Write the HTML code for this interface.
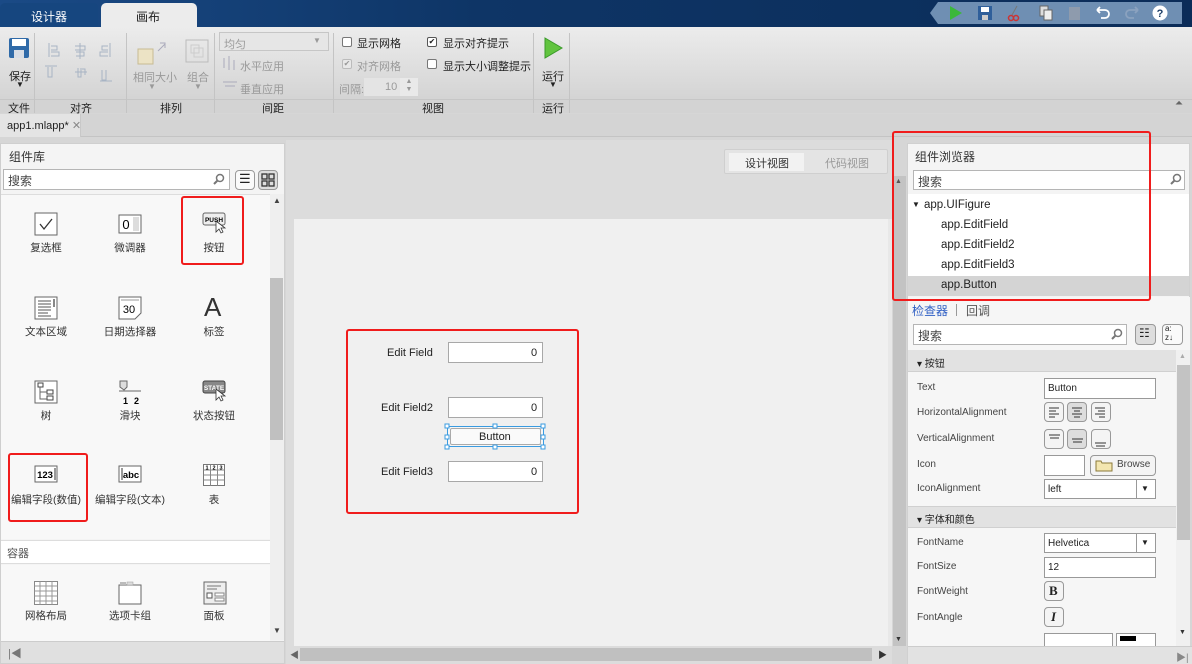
<!DOCTYPE html>
<html><head><meta charset="utf-8"><style>
*{box-sizing:border-box;margin:0;padding:0}
body{width:1192px;height:664px;overflow:hidden;position:relative;background:#d6d6d6;font-family:"Liberation Sans","Noto Sans CJK SC",sans-serif;font-size:11px;color:#222}
.a{position:absolute}
.t{position:absolute;white-space:nowrap}
.red{position:absolute;border:2.5px solid #f01c1c;border-radius:3px}
.ic{position:absolute;text-align:center;width:80px;font-size:10.5px;color:#333}
.box{position:absolute;background:#fff;border:1px solid #aaa}
.lbl{position:absolute;font-size:10px;color:#444;white-space:nowrap}
.g{color:#999}
.btn{position:absolute;width:18px;height:18px;border:1px solid #999;border-radius:4px;background:#f4f4f4}
</style></head><body>
<!-- top bar -->
<div class="a" style="left:0;top:0;width:1192px;height:27px;background:linear-gradient(90deg,#1a4a86,#0e3566 40%,#0b2c58)"></div>
<div class="a" style="left:0;top:3px;width:98px;height:24px;background:#16467f;border-radius:5px 5px 0 0"></div>
<div class="t" style="left:31px;top:8px;color:#fff;font-size:12px">设计器</div>
<div class="a" style="left:101px;top:3px;width:96px;height:24px;background:#ececec;border-radius:5px 5px 0 0"></div>
<div class="t" style="left:136px;top:8px;color:#222;font-size:12px">画布</div>
<div class="a" style="left:930px;top:2px;width:252px;height:22px;background:#6f8fb3;clip-path:polygon(8px 0,100% 0,100% 100%,8px 100%,0 50%)"></div>
<svg class="a" style="left:945px;top:4px" width="235" height="18">
<polygon points="5,2 17,9 5,16" fill="#3bb83b"/>
<rect x="33" y="2" width="14" height="14" fill="#2f5f9a"/><rect x="36" y="3" width="8" height="5" fill="#fff"/><rect x="37" y="11" width="6" height="5" fill="#ccc"/>
<circle cx="66" cy="14" r="2.5" fill="none" stroke="#c33" stroke-width="1.5"/><circle cx="71" cy="14" r="2.5" fill="none" stroke="#c33" stroke-width="1.5"/><line x1="67" y1="11" x2="72" y2="2" stroke="#777"/>
<rect x="95" y="2" width="8" height="10" fill="#ddd" stroke="#666"/><rect x="99" y="6" width="8" height="10" fill="#eee" stroke="#666"/>
<rect x="124" y="3" width="11" height="13" fill="#8e9bad"/>
<path d="M152 6 h8 a4 4 0 0 1 0 8 h-4 M152 6 l3 -3 M152 6 l3 3" fill="none" stroke="#fff" stroke-width="1.8"/>
<path d="M193 6 h-8 a4 4 0 0 0 0 8 h4 M193 6 l-3 -3 M193 6 l-3 3" fill="none" stroke="#8ba2bf" stroke-width="1.8"/>
<circle cx="215" cy="9" r="7.5" fill="#fff"/><text x="215" y="13" font-size="11" font-weight="bold" text-anchor="middle" fill="#1c3d66" font-family="Liberation Sans">?</text>
</svg>
<!-- ribbon -->
<div class="a" style="left:0;top:27px;width:1192px;height:86px;background:linear-gradient(#ececec,#cfcfcf)"></div>
<div class="a" style="left:0;top:99px;width:1192px;height:14px;background:#d3d3d3;border-top:1px solid #c6c6c6"></div>
<div class="a" style="left:34px;top:33px;width:1px;height:80px;background:#c4c4c4"></div>
<div class="a" style="left:126px;top:33px;width:1px;height:80px;background:#c4c4c4"></div>
<div class="a" style="left:214px;top:33px;width:1px;height:80px;background:#c4c4c4"></div>
<div class="a" style="left:333px;top:33px;width:1px;height:80px;background:#c4c4c4"></div>
<div class="a" style="left:533px;top:33px;width:1px;height:80px;background:#c4c4c4"></div>
<div class="a" style="left:569px;top:33px;width:1px;height:80px;background:#c4c4c4"></div>
<div class="t" style="left:8px;top:100px">文件</div><div class="t" style="left:70px;top:100px">对齐</div><div class="t" style="left:160px;top:100px">排列</div><div class="t" style="left:262px;top:100px">间距</div><div class="t" style="left:422px;top:100px">视图</div><div class="t" style="left:542px;top:100px">运行</div>
<svg class="a" style="left:8px;top:37px" width="22" height="22"><rect x="1" y="1" width="20" height="20" rx="2" fill="#2f6aa8"/><rect x="4" y="2" width="14" height="7" fill="#fff"/><rect x="6" y="13" width="10" height="8" fill="#d8dde5"/></svg>
<div class="t" style="left:9px;top:68px;font-size:11px">保存</div><div class="t" style="left:16px;top:80px;font-size:8px">▼</div>
<svg class="a" style="left:42px;top:40px" width="80" height="45" fill="none" stroke="#a8b4c4"><path d="M7 3v14M9 6h6v4H9M9 12h8v4H9"/><path d="M38 3v16M33 6h10v4H33M34 12h8v4h-8"/><path d="M68 3v14M66 6h-6v4h6M66 12h-8v4h8"/><path d="M3 26h12M6 27v10h4V27"/><path d="M33 32h12M36 28v9h3v-9M40 29h3v6"/><path d="M58 41h12M60 30v10h4V30"/></svg>
<svg class="a" style="left:136px;top:37px" width="75" height="30"><rect x="2" y="12" width="15" height="15" fill="#ece3c5" stroke="#c7bb93"/><path d="M22 14l7-7M24 6h5v5" stroke="#aab" fill="none"/><rect x="50" y="3" width="22" height="22" fill="none" stroke="#bbb"/><rect x="55" y="8" width="8" height="8" fill="none" stroke="#ccc"/><rect x="58" y="11" width="9" height="9" fill="none" stroke="#ccc"/></svg>
<div class="t g" style="left:133px;top:69px">相同大小</div><div class="t g" style="left:187px;top:69px">组合</div>
<div class="t g" style="left:148px;top:82px;font-size:8px">▼</div><div class="t g" style="left:194px;top:82px;font-size:8px">▼</div>
<div class="a" style="left:219px;top:32px;width:110px;height:19px;border:1px solid #c6c6c6;background:#e6e6e6"></div>
<div class="t g" style="left:224px;top:36px">均匀</div><div class="t g" style="left:313px;top:36px;font-size:8px">▼</div>
<div class="t g" style="left:240px;top:58px">水平应用</div><div class="t g" style="left:240px;top:81px">垂直应用</div>
<svg class="a" style="left:222px;top:55px" width="16" height="40" stroke="#aab" fill="none"><path d="M2 3v10M7 1v14M12 5v10"/><path d="M1 27h14M3 31h10" /></svg>
<div class="a" style="left:342px;top:37px;width:10px;height:10px;border:1px solid #777;background:#fff;border-radius:2px"></div>
<div class="t" style="left:357px;top:35px">显示网格</div>
<div class="a" style="left:342px;top:59px;width:10px;height:10px;border:1px solid #bbb;background:#e8e8e8;border-radius:2px;font-size:8px;line-height:8px;color:#999;text-align:center">✔</div>
<div class="t g" style="left:357px;top:58px">对齐网格</div>
<div class="t g" style="left:339px;top:81px">间隔:</div>
<div class="a" style="left:364px;top:78px;width:36px;height:18px;background:#e4e4e4"></div><div class="t g" style="left:385px;top:81px">10</div>
<div class="a" style="left:400px;top:78px;width:18px;height:18px;background:#e9e9e9;font-size:7px;color:#999;text-align:center;line-height:8px">▲<br>▼</div>
<div class="a" style="left:427px;top:37px;width:10px;height:10px;border:1px solid #555;background:#fff;border-radius:2px;font-size:8px;line-height:8px;text-align:center">✔</div>
<div class="t" style="left:443px;top:35px">显示对齐提示</div>
<div class="a" style="left:427px;top:59px;width:10px;height:10px;border:1px solid #777;background:#fff;border-radius:2px"></div>
<div class="t" style="left:443px;top:58px">显示大小调整提示</div>
<svg class="a" style="left:543px;top:37px" width="20" height="22"><polygon points="2,1 19,11 2,21" fill="#61c43f" stroke="#3a9a2a"/></svg>
<div class="t" style="left:542px;top:68px">运行</div><div class="t" style="left:549px;top:80px;font-size:8px">▼</div>
<div class="t" style="left:1175px;top:98px;font-size:10px;color:#666">⏶</div>
<!-- doc tab bar -->
<div class="a" style="left:0;top:114px;width:1192px;height:23px;background:#d4d4d4;border-bottom:1px solid #c4c4c4"></div>
<div class="a" style="left:0;top:114px;width:81px;height:23px;background:#e4e4e4;border-right:1px solid #c8c8c8"></div>
<div class="t" style="left:7px;top:119px;font-size:11px">app1.mlapp* <span style="color:#888">✕</span></div>
<!-- left panel -->
<div class="a" style="left:0;top:143px;width:285px;height:521px;background:#f4f4f4;border:1px solid #cfcfcf"></div>
<div class="t" style="left:9px;top:148px;font-size:12px;color:#333">组件库</div>
<div class="box" style="left:3px;top:169px;width:227px;height:21px;border-color:#b5b5b5"></div>
<div class="t" style="left:8px;top:172px;font-size:12px;color:#444">搜索</div>
<svg class="a" style="left:213px;top:173px" width="12" height="12"><circle cx="7" cy="5" r="3.5" fill="none" stroke="#777" stroke-width="1.5"/><path d="M4.5 7.5L1 11" stroke="#777" stroke-width="2"/></svg>
<div class="btn" style="left:235px;top:170px;width:20px;height:20px;background:#fafafa"></div><div class="t" style="left:239px;top:171px;font-size:13px">☰</div>
<div class="btn" style="left:258px;top:170px;width:20px;height:20px;background:#ddd"></div>
<svg class="a" style="left:261px;top:173px" width="14" height="14" fill="none" stroke="#333" stroke-width="1.3"><rect x="1" y="1" width="5" height="5"/><rect x="8" y="1" width="5" height="5"/><rect x="1" y="8" width="5" height="5"/><rect x="8" y="8" width="5" height="5"/></svg>
<div class="a" style="left:1px;top:194px;width:269px;height:345px;background:#f8f8f8;border-top:1px solid #ddd"></div>
<div class="a" style="left:270px;top:194px;width:14px;height:446px;background:#efefef"></div>
<div class="a" style="left:270px;top:278px;width:13px;height:162px;background:#c0c0c0"></div>
<div class="t" style="left:273px;top:196px;font-size:8px;color:#444">▲</div><div class="t" style="left:273px;top:626px;font-size:8px;color:#444">▼</div>
<!-- icons row1 -->
<svg class="a" style="left:34px;top:212px" width="24" height="24"><rect x="1" y="1" width="22" height="22" fill="#fff" stroke="#666"/><path d="M6 12l4 5 8-10" fill="none" stroke="#333" stroke-width="1.3"/></svg>
<div class="ic" style="left:6px;top:240px">复选框</div>
<svg class="a" style="left:118px;top:214px" width="24" height="20"><rect x="1" y="1" width="22" height="18" fill="#fff" stroke="#666"/><text x="8" y="15" font-size="13" text-anchor="middle" font-family="Liberation Sans">0</text><rect x="15" y="3" width="6" height="14" fill="#ddd"/></svg>
<div class="ic" style="left:90px;top:240px">微调器</div>
<svg class="a" style="left:202px;top:212px" width="26" height="22"><rect x="1" y="1" width="22" height="12" rx="2" fill="#eee" stroke="#666"/><text x="12" y="10" font-size="6.5" font-weight="bold" text-anchor="middle" font-family="Liberation Sans">PUSH</text><path d="M14 9v11l3-3 2 4 2-1-2-4h4z" fill="#fff" stroke="#333" stroke-width=".8"/></svg>
<div class="ic" style="left:174px;top:240px">按钮</div>
<!-- row2 -->
<svg class="a" style="left:34px;top:296px" width="24" height="24"><rect x="1" y="1" width="22" height="22" fill="#fff" stroke="#666"/><path d="M4 5h13M4 8h13M4 11h13M4 14h13M4 17h10M4 20h13" stroke="#555"/><rect x="19" y="3" width="2" height="8" fill="#888"/></svg>
<div class="ic" style="left:6px;top:324px">文本区域</div>
<svg class="a" style="left:118px;top:296px" width="24" height="24"><path d="M1 1h22v16l-6 6H1z" fill="#fff" stroke="#666"/><path d="M3 4h18" stroke="#999"/><text x="11" y="17" font-size="11" text-anchor="middle" font-family="Liberation Sans">30</text></svg>
<div class="ic" style="left:90px;top:324px">日期选择器</div>
<div class="t" style="left:204px;top:292px;font-size:26px;color:#333">A</div>
<div class="ic" style="left:174px;top:324px">标签</div>
<!-- row3 -->
<svg class="a" style="left:34px;top:380px" width="24" height="24"><rect x="1" y="1" width="22" height="22" fill="#fff" stroke="#666"/><rect x="4" y="3" width="5" height="4" fill="none" stroke="#444"/><rect x="13" y="10" width="6" height="4" fill="none" stroke="#444"/><rect x="13" y="16" width="6" height="4" fill="none" stroke="#444"/><path d="M6 7v12h7M6 12h7" fill="none" stroke="#666"/></svg>
<div class="ic" style="left:6px;top:408px">树</div>
<svg class="a" style="left:118px;top:380px" width="24" height="26"><path d="M2 1h7v6l-3 3-4-3z" fill="#ddd" stroke="#666"/><path d="M1 11h22" stroke="#666"/><text x="5" y="24" font-size="9" font-weight="bold" font-family="Liberation Sans">1</text><text x="16" y="24" font-size="9" font-weight="bold" font-family="Liberation Sans">2</text></svg>
<div class="ic" style="left:90px;top:408px">滑块</div>
<svg class="a" style="left:202px;top:380px" width="26" height="24"><rect x="1" y="1" width="22" height="12" rx="2" fill="#888" stroke="#444"/><text x="12" y="10" font-size="6.5" font-weight="bold" fill="#fff" text-anchor="middle" font-family="Liberation Sans">STATE</text><path d="M14 9v11l3-3 2 4 2-1-2-4h4z" fill="#fff" stroke="#333" stroke-width=".8"/></svg>
<div class="ic" style="left:174px;top:408px">状态按钮</div>
<!-- row4 -->
<svg class="a" style="left:34px;top:465px" width="24" height="20"><rect x="1" y="1" width="22" height="16" fill="#fff" stroke="#666"/><text x="11" y="13" font-size="9.5" font-weight="bold" text-anchor="middle" font-family="Liberation Sans">123</text><path d="M21 3v12" stroke="#333"/></svg>
<div class="ic" style="left:6px;top:492px">编辑字段(数值)</div>
<svg class="a" style="left:118px;top:465px" width="24" height="20"><rect x="1" y="1" width="22" height="16" fill="#fff" stroke="#666"/><text x="13" y="13" font-size="9.5" font-weight="bold" text-anchor="middle" font-family="Liberation Sans">abc</text><path d="M4 3v12" stroke="#333"/></svg>
<div class="ic" style="left:90px;top:492px">编辑字段(文本)</div>
<svg class="a" style="left:203px;top:464px" width="22" height="22"><rect x=".5" y=".5" width="21" height="21" fill="#fff" stroke="#777"/><path d="M.5 6h21M.5 11h21M.5 16h21M7.5 .5v21M14.5 .5v21" stroke="#888"/><text x="4" y="5.5" font-size="5.5" text-anchor="middle" font-weight="bold">1</text><text x="11" y="5.5" font-size="5.5" text-anchor="middle" font-weight="bold">2</text><text x="18" y="5.5" font-size="5.5" text-anchor="middle" font-weight="bold">3</text></svg>
<div class="ic" style="left:174px;top:492px">表</div>
<div class="a" style="left:1px;top:540px;width:269px;height:24px;background:#fff;border-top:1px solid #ddd;border-bottom:1px solid #ddd"></div>
<div class="t" style="left:7px;top:545px;color:#555">容器</div>
<div class="a" style="left:1px;top:565px;width:269px;height:76px;background:#f8f8f8"></div>
<svg class="a" style="left:34px;top:581px" width="24" height="24"><rect x=".5" y=".5" width="23" height="23" fill="#fff" stroke="#888"/><path d="M.5 5h23M.5 10h23M.5 15h23M.5 20h23M6 .5v23M12 .5v23M18 .5v23" stroke="#999"/></svg>
<div class="ic" style="left:6px;top:608px">网格布局</div>
<svg class="a" style="left:118px;top:581px" width="24" height="24"><path d="M1 4h22v19H1z" fill="#fff" stroke="#666"/><rect x="2" y="1" width="6" height="3" fill="#bbb"/><rect x="9" y="1" width="6" height="3" fill="#ddd" stroke="#999" stroke-width=".5"/></svg>
<div class="ic" style="left:90px;top:608px">选项卡组</div>
<svg class="a" style="left:203px;top:581px" width="24" height="24"><rect x="1" y="1" width="22" height="22" fill="#eee" stroke="#666"/><path d="M4 5h14M4 8h10" stroke="#777"/><rect x="4" y="12" width="5" height="5" fill="#fff" stroke="#555"/><rect x="12" y="12" width="9" height="3" fill="#fff" stroke="#888"/><rect x="12" y="17" width="9" height="3" fill="#fff" stroke="#888"/></svg>
<div class="ic" style="left:174px;top:608px">面板</div>
<div class="a" style="left:1px;top:641px;width:283px;height:22px;background:#e0e0e0;border-top:1px solid #ccc"></div>
<div class="t" style="left:8px;top:645px;color:#777;font-size:11px">|◀</div>
<!-- center -->
<div class="a" style="left:286px;top:140px;width:606px;height:524px;background:#dcdcdc"></div>
<div class="a" style="left:724px;top:149px;width:164px;height:25px;background:#e4e4e4;border:1px solid #cfcfcf;border-radius:2px"></div>
<div class="a" style="left:729px;top:153px;width:75px;height:18px;background:#f2f2f2"></div>
<div class="t" style="left:745px;top:155px;color:#333">设计视图</div>
<div class="t" style="left:825px;top:155px;color:#999">代码视图</div>
<div class="a" style="left:294px;top:219px;width:598px;height:427px;background:#f0f0f0"></div>
<div class="a" style="left:888px;top:219px;width:4px;height:427px;background:#e8e8e8"></div>
<div class="a" style="left:300px;top:648px;width:572px;height:13px;background:#c0c0c0"></div>
<div class="t" style="left:290px;top:648px;font-size:9px;color:#666">◀</div>
<div class="t" style="left:878px;top:648px;font-size:9px;color:#333">▶</div>
<div class="t" style="left:387px;top:347px">Edit Field</div>
<div class="box" style="left:448px;top:342px;width:95px;height:21px;border-color:#a8a8a8"></div><div class="t" style="left:531px;top:347px">0</div>
<div class="t" style="left:381px;top:402px">Edit Field2</div>
<div class="box" style="left:448px;top:397px;width:95px;height:21px;border-color:#a8a8a8"></div><div class="t" style="left:531px;top:402px">0</div>
<div class="a" style="left:447px;top:426px;width:97px;height:21px;border:1px solid #3a9be0;background:#f6f6f6"></div>
<div class="a" style="left:450px;top:428px;width:91px;height:17px;border:1px solid #aaa;border-radius:2px;background:#fafafa"></div>
<div class="t" style="left:479px;top:431px">Button</div>
<svg class="a" style="left:444px;top:423px" width="104" height="28"><g fill="#fff" stroke="#3a9be0"><rect x="1" y="1" width="4" height="4"/><rect x="49" y="1" width="4" height="4"/><rect x="97" y="1" width="4" height="4"/><rect x="1" y="12" width="4" height="4"/><rect x="97" y="12" width="4" height="4"/><rect x="1" y="22" width="4" height="4"/><rect x="49" y="22" width="4" height="4"/><rect x="97" y="22" width="4" height="4"/></g></svg>
<div class="t" style="left:381px;top:466px">Edit Field3</div>
<div class="box" style="left:448px;top:461px;width:95px;height:21px;border-color:#a8a8a8"></div><div class="t" style="left:531px;top:466px">0</div>
<!-- right -->
<div class="a" style="left:892px;top:137px;width:300px;height:527px;background:#d6d6d6"></div>
<div class="a" style="left:893px;top:176px;width:13px;height:470px;background:#c3c3c3"></div>
<div class="t" style="left:895px;top:178px;font-size:7px;color:#555">▲</div>
<div class="t" style="left:895px;top:636px;font-size:7px;color:#333">▼</div>
<div class="a" style="left:907px;top:143px;width:283px;height:160px;background:#f4f4f4;border:1px solid #d0d0d0"></div>
<div class="t" style="left:915px;top:148px;font-size:12px;color:#333">组件浏览器</div>
<div class="box" style="left:913px;top:170px;width:272px;height:20px;border-color:#b5b5b5"></div>
<div class="t" style="left:918px;top:173px;font-size:12px;color:#444">搜索</div>
<svg class="a" style="left:1170px;top:173px" width="12" height="12"><circle cx="7" cy="5" r="3.5" fill="none" stroke="#777" stroke-width="1.5"/><path d="M4.5 7.5L1 11" stroke="#777" stroke-width="2"/></svg>
<div class="a" style="left:908px;top:194px;width:281px;height:102px;background:#fff"></div>
<div class="t" style="left:912px;top:200px;font-size:8px">▼</div>
<div class="t" style="left:924px;top:199px;font-size:11.5px">app.UIFigure</div>
<div class="t" style="left:941px;top:219px;font-size:11.5px">app.EditField</div>
<div class="t" style="left:941px;top:239px;font-size:11.5px">app.EditField2</div>
<div class="t" style="left:941px;top:259px;font-size:11.5px">app.EditField3</div>
<div class="a" style="left:908px;top:276px;width:281px;height:20px;background:#d4d4d4"></div>
<div class="t" style="left:941px;top:279px;font-size:11.5px">app.Button</div>
<div class="a" style="left:907px;top:297px;width:283px;height:367px;background:#f6f6f6;border-left:1px solid #d0d0d0"></div>
<div class="t" style="left:912px;top:302px;font-size:12px;color:#2f5fc4">检查器</div>
<div class="a" style="left:956px;top:304px;width:1px;height:12px;background:#999"></div>
<div class="t" style="left:966px;top:302px;font-size:12px;color:#555">回调</div>
<div class="box" style="left:913px;top:324px;width:214px;height:21px;border-color:#b5b5b5"></div>
<div class="t" style="left:918px;top:327px;font-size:12px;color:#444">搜索</div>
<svg class="a" style="left:1111px;top:328px" width="12" height="12"><circle cx="7" cy="5" r="3.5" fill="none" stroke="#777" stroke-width="1.5"/><path d="M4.5 7.5L1 11" stroke="#777" stroke-width="2"/></svg>
<div class="btn" style="left:1135px;top:324px;width:21px;height:21px;background:#ddd"></div><div class="t" style="left:1139px;top:326px;font-size:12px">☷</div>
<div class="btn" style="left:1162px;top:324px;width:21px;height:21px;background:#fafafa"></div><div class="t" style="left:1165px;top:324px;font-size:8px;line-height:9px">a:<br>z↓</div>
<div class="a" style="left:908px;top:350px;width:268px;height:22px;background:#e2e2e2;border-bottom:1px solid #d0d0d0"></div>
<div class="t" style="left:917px;top:355px;font-size:10px">▾ 按钮</div>
<div class="a" style="left:1176px;top:350px;width:14px;height:296px;background:#f0f0f0"></div>
<div class="a" style="left:1177px;top:365px;width:13px;height:175px;background:#c3c3c3"></div>
<div class="t" style="left:1179px;top:353px;font-size:7px;color:#aaa">▲</div><div class="t" style="left:1179px;top:629px;font-size:7px;color:#333">▼</div>
<div class="lbl" style="left:917px;top:382px">Text</div>
<div class="box" style="left:1044px;top:378px;width:112px;height:21px;border-color:#999"></div><div class="lbl" style="left:1048px;top:383px;color:#222">Button</div>
<div class="lbl" style="left:917px;top:407px">HorizontalAlignment</div>
<div class="btn" style="left:1044px;top:402px;width:20px;height:20px"></div><div class="btn" style="left:1067px;top:402px;width:20px;height:20px;background:#ddd"></div><div class="btn" style="left:1091px;top:402px;width:20px;height:20px"></div>
<svg class="a" style="left:1048px;top:406px" width="60" height="12" stroke="#333"><path d="M1 2h10M1 5h7M1 8h10M1 11h6M24 2h10M26 5h6M24 8h10M26 11h6M47 2h10M50 5h7M47 8h10M51 11h6"/></svg>
<div class="lbl" style="left:917px;top:433px">VerticalAlignment</div>
<div class="btn" style="left:1044px;top:429px;width:20px;height:20px"></div><div class="btn" style="left:1067px;top:429px;width:20px;height:20px;background:#ddd"></div><div class="btn" style="left:1091px;top:429px;width:20px;height:20px"></div>
<svg class="a" style="left:1048px;top:432px" width="60" height="15" stroke="#333"><path d="M1 3h11M2 6h9M24 7h11M25 10h9M47 11h11M48 14h9"/></svg>
<div class="lbl" style="left:917px;top:459px">Icon</div>
<div class="box" style="left:1044px;top:455px;width:41px;height:21px;border-color:#999"></div>
<div class="btn" style="left:1090px;top:455px;width:66px;height:21px;border-radius:4px"></div>
<svg class="a" style="left:1095px;top:459px" width="18" height="13"><path d="M1 2h5l1 2h10v8H1z" fill="#f3e6b0" stroke="#8b7a3a"/></svg>
<div class="lbl" style="left:1117px;top:459px">Browse</div>
<div class="lbl" style="left:917px;top:483px">IconAlignment</div>
<div class="box" style="left:1044px;top:479px;width:112px;height:20px;border-color:#999"></div><div class="lbl" style="left:1048px;top:484px;color:#222">left</div>
<div class="a" style="left:1136px;top:479px;width:1px;height:20px;background:#999"></div><div class="t" style="left:1141px;top:484px;font-size:8px">▼</div>
<div class="a" style="left:908px;top:506px;width:268px;height:22px;background:#e2e2e2;border-top:1px solid #d0d0d0;border-bottom:1px solid #d0d0d0"></div>
<div class="t" style="left:917px;top:511px;font-size:10px">▾ 字体和颜色</div>
<div class="lbl" style="left:917px;top:537px">FontName</div>
<div class="box" style="left:1044px;top:533px;width:112px;height:20px;border-color:#999"></div><div class="lbl" style="left:1048px;top:538px;color:#222">Helvetica</div>
<div class="a" style="left:1136px;top:533px;width:1px;height:20px;background:#999"></div><div class="t" style="left:1141px;top:538px;font-size:8px">▼</div>
<div class="lbl" style="left:917px;top:561px">FontSize</div>
<div class="box" style="left:1044px;top:557px;width:112px;height:21px;border-color:#999"></div><div class="lbl" style="left:1048px;top:562px;color:#222">12</div>
<div class="lbl" style="left:917px;top:586px">FontWeight</div>
<div class="btn" style="left:1044px;top:581px;width:20px;height:20px"></div><div class="t" style="left:1049px;top:583px;font-size:13px;font-weight:bold;font-family:'Liberation Serif',serif">B</div>
<div class="lbl" style="left:917px;top:612px">FontAngle</div>
<div class="btn" style="left:1044px;top:607px;width:20px;height:20px"></div><div class="t" style="left:1051px;top:609px;font-size:13px;font-style:italic;font-weight:bold;font-family:'Liberation Serif',serif">I</div>
<div class="box" style="left:1044px;top:633px;width:69px;height:14px;border-color:#999"></div>
<div class="box" style="left:1116px;top:633px;width:40px;height:14px;border-color:#999"></div><div class="a" style="left:1120px;top:636px;width:16px;height:5px;background:#000"></div>
<div class="a" style="left:908px;top:646px;width:284px;height:18px;background:#e2e2e2;border-top:1px solid #ccc"></div>
<div class="t" style="left:1176px;top:649px;color:#888;font-size:10px">▶|</div>
<!-- red boxes -->
<div class="red" style="left:181px;top:196px;width:63px;height:69px"></div>
<div class="red" style="left:8px;top:453px;width:80px;height:69px"></div>
<div class="red" style="left:346px;top:329px;width:233px;height:185px"></div>
<div class="red" style="left:892px;top:131px;width:259px;height:170px"></div>
</body></html>
